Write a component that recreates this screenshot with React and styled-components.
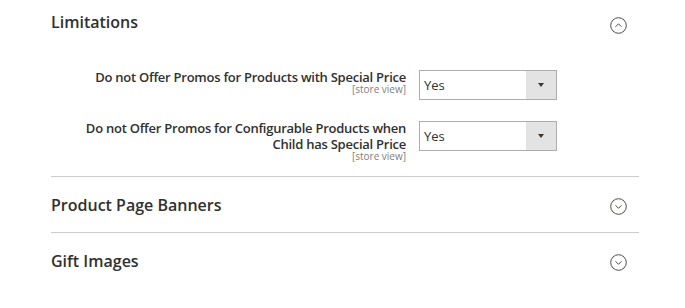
import React from "react";
import styled, { createGlobalStyle } from "styled-components";

const Global = createGlobalStyle`
  html, body { margin: 0; padding: 0; background: #ffffff; }
  body { font-family: "Open Sans", "Noto Sans", sans-serif; color: #303030; }
`;

const Page = styled.div`
  width: 685px;
  height: 308px;
  box-sizing: border-box;
  padding: 0 46px 0 51px;
  overflow: hidden;
`;

const Section = styled.section`
  border-top: ${(p) => (p.$first ? "none" : "1px solid #cccccc")};
`;

const TitleRow = styled.div`
  display: flex;
  align-items: center;
  justify-content: space-between;
  padding: ${(p) => (p.$first ? "12px 12px 17px 0" : "18px 12px 17px 0")};
`;

const Title = styled.h2`
  margin: 0;
  font-size: 16px;
  line-height: 20px;
  font-weight: 600;
  color: #303030;
`;

const IconWrap = styled.span`
  display: flex;
  width: 17px;
  height: 17px;
  transform: translateY(${(p) => (p.$open ? "3px" : "1px")});
`;

const Fields = styled.div`
  display: flex;
  flex-direction: column;
  gap: 20px;
  padding: 20px 0 15px 0;
`;

const FieldRow = styled.div`
  display: grid;
  grid-template-columns: 355px 138px;
  column-gap: 13px;
  align-items: start;
`;

const Label = styled.label`
  text-align: right;
  font-size: 13px;
  line-height: 16px;
  font-weight: 600;
  letter-spacing: -0.25px;
  color: #303030;
`;

const Scope = styled.span`
  display: block;
  margin-top: -1px;
  font-size: 10px;
  line-height: 10px;
  font-weight: 400;
  letter-spacing: 0;
  color: #808080;
`;

const Select = styled.div`
  box-sizing: border-box;
  margin-top: 1px;
  height: 30px;
  border: 1px solid #adadad;
  background: #ffffff;
  display: flex;
  align-items: stretch;
`;

const SelectValue = styled.span`
  flex: 1;
  display: flex;
  align-items: center;
  padding-left: 4px;
  font-size: 13px;
  color: #303030;
`;

const SelectButton = styled.span`
  width: 30px;
  background: #e3e3e3;
  display: flex;
  align-items: center;
  justify-content: center;
`;

const Arrow = styled.span`
  width: 0;
  height: 0;
  border-left: 3.5px solid transparent;
  border-right: 3.5px solid transparent;
  border-top: 4px solid #41362f;
`;

function CircleChevron({ open }) {
  return (
    <IconWrap $open={open}>
      <svg width="17" height="17" viewBox="0 0 17 17" fill="none">
        <circle cx="8.5" cy="8.5" r="7.8" stroke="#514943" strokeWidth="1" />
        {open ? (
          <path d="M5.5 9.8 L8.5 6.8 L11.5 9.8" stroke="#514943" strokeWidth="1" />
        ) : (
          <path d="M5.5 7.3 L8.5 10.3 L11.5 7.3" stroke="#514943" strokeWidth="1" />
        )}
      </svg>
    </IconWrap>
  );
}

function Field({ label, value }) {
  return (
    <FieldRow>
      <Label>
        {label}
        <Scope>[store view]</Scope>
      </Label>
      <Select>
        <SelectValue>{value}</SelectValue>
        <SelectButton>
          <Arrow />
        </SelectButton>
      </Select>
    </FieldRow>
  );
}

export default function App() {
  return (
    <>
      <Global />
      <Page>
        <Section $first>
          <TitleRow $first>
            <Title>Limitations</Title>
            <CircleChevron open />
          </TitleRow>
          <Fields>
            <Field label="Do not Offer Promos for Products with Special Price" value="Yes" />
            <Field
              label={
                <>
                  Do not Offer Promos for Configurable Products when
                  <br />
                  Child has Special Price
                </>
              }
              value="Yes"
            />
          </Fields>
        </Section>
        <Section>
          <TitleRow>
            <Title>Product Page Banners</Title>
            <CircleChevron />
          </TitleRow>
        </Section>
        <Section>
          <TitleRow>
            <Title>Gift Images</Title>
            <CircleChevron />
          </TitleRow>
        </Section>
      </Page>
    </>
  );
}
